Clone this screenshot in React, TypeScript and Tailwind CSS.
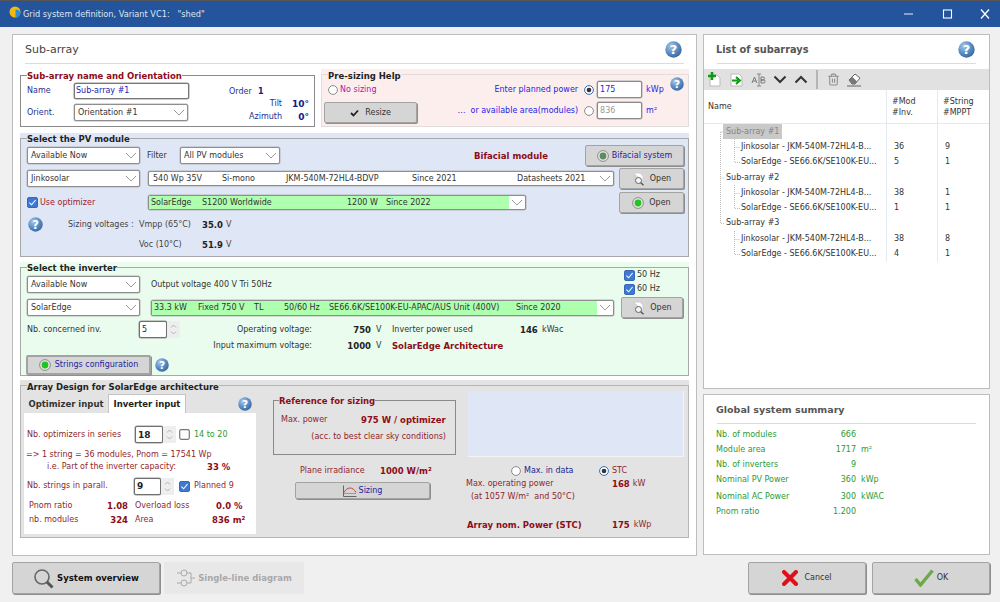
import React from "react";
import { Trash2 } from "lucide-react";

const Help = ({ s = 17 }: { s?: number }) => (
  <svg width={s} height={s} viewBox="0 0 17 17" className="shrink-0">
    <defs>
      <radialGradient id="hg" cx="35%" cy="30%" r="75%">
        <stop offset="0%" stopColor="#a9c6e6" />
        <stop offset="55%" stopColor="#5c8fc6" />
        <stop offset="100%" stopColor="#3a669f" />
      </radialGradient>
    </defs>
    <circle cx="8.5" cy="8.5" r="8.2" fill="url(#hg)" />
    <text x="8.5" y="13.2" textAnchor="middle" fontSize="13" fontWeight="700" fill="#fff" fontFamily="DejaVu Sans">?</text>
  </svg>
);

const Chev = () => (
  <svg width="12" height="7" viewBox="0 0 12 7" className="shrink-0">
    <polyline points="1,1 6,6 11,1" fill="none" stroke="#9a9a9a" strokeWidth="1" />
  </svg>
);

const Combo = ({ className = "", children, green = false }: { className?: string; children?: React.ReactNode; green?: boolean }) => (
  <div className={`flex items-stretch bg-white border border-[#8e8e8e] rounded-[2px] shadow-[0_0_0_0.5px_#b5b5b5] text-[#333] ${className}`}>
    <div className={`flex-1 min-w-0 flex items-center whitespace-nowrap overflow-hidden ${green ? "bg-[#aeffae]" : ""}`}>{children}</div>
    <div className="w-[16px] flex items-center justify-center shrink-0"><Chev /></div>
  </div>
);

const Led = ({ on = true }: { on?: boolean }) => (
  <svg width="12" height="12" viewBox="0 0 12 12" className="shrink-0">
    <circle cx="6" cy="6" r="5.4" fill="#e6e6e6" stroke="#777" strokeWidth="0.8" />
    <circle cx="6" cy="6" r="3.4" fill={on ? "#22c422" : "#5f8a62"} />
  </svg>
);

const OpenIcon = () => (
  <svg width="13" height="14" viewBox="0 0 13 14" className="shrink-0">
    <path d="M2 1h6l3 3v5" fill="#fff" stroke="#cfcfcf" />
    <path d="M2 1v10h3" fill="none" stroke="#cfcfcf" />
    <circle cx="6.5" cy="8.5" r="3" fill="#f4f4f4" stroke="#666" strokeWidth="1" />
    <line x1="8.8" y1="10.8" x2="11.5" y2="13.2" stroke="#555" strokeWidth="1.5" />
  </svg>
);

const Btn = ({ className = "", children }: { className?: string; children?: React.ReactNode }) => (
  <div className={`flex items-center justify-center shrink-0 bg-[#d5d5d5] border border-[#a3a3a3] rounded-[2px] shadow-[1px_1px_0_#8f8f8f] ${className}`}>{children}</div>
);

const OpenBtn = ({ className = "", icon }: { className?: string; icon?: React.ReactNode }) => (
  <Btn className={`gap-[5px] text-[#333] ${className}`}>{icon ?? <OpenIcon />}Open</Btn>
);

const Check = ({ on = true }: { on?: boolean }) =>
  on ? (
    <svg width="11" height="11" viewBox="0 0 11 11" className="shrink-0">
      <rect x="0.5" y="0.5" width="10" height="10" rx="1.5" fill="#3f78d0" stroke="#3568b8" />
      <polyline points="2.4,5.6 4.6,7.8 8.6,3" fill="none" stroke="#fff" strokeWidth="1.1" />
    </svg>
  ) : (
    <svg width="11" height="11" viewBox="0 0 11 11" className="shrink-0">
      <rect x="0.7" y="0.7" width="9.6" height="9.6" rx="1.5" fill="#fff" stroke="#777" strokeWidth="1.2" />
    </svg>
  );

const Radio = ({ on = false }: { on?: boolean }) => (
  <svg width="10" height="10" viewBox="0 0 10 10" className="shrink-0">
    <circle cx="5" cy="5" r="4.4" fill="#fff" stroke={on ? "#2f6cb5" : "#8a8a8a"} strokeWidth="1" />
    {on && <circle cx="5" cy="5" r="2.3" fill="#333" />}
  </svg>
);

const Spin = ({ v, w, bold = false }: { v: string; w: string; bold?: boolean }) => (
  <div className="flex items-stretch h-[17px] shrink-0">
    <div className={`bg-white border border-[#707070] rounded-[2px] shadow-[0_0_0_0.5px_#999] flex items-center pl-[2px] text-[#222] ${w} ${bold ? "font-bold text-[9px]" : ""}`}>{v}</div>
    <div className="w-[13px] bg-[#eeeeee] flex flex-col items-center justify-center gap-[3px]">
      <svg width="7" height="4" viewBox="0 0 7 4"><polyline points="1,3.5 3.5,1 6,3.5" fill="none" stroke="#b0b0b0" /></svg>
      <svg width="7" height="4" viewBox="0 0 7 4"><polyline points="1,0.5 3.5,3 6,0.5" fill="none" stroke="#b0b0b0" /></svg>
    </div>
  </div>
);

const Section = ({ title, color = "text-[#222]", className = "", border = "border-[#a8a8a8]", children, legendCls = "ml-[6px] translate-y-px" }: { title: string; color?: string; className?: string; border?: string; children?: React.ReactNode; legendCls?: string }) => (
  <fieldset className={`min-w-0 border ${border} ${className}`}>
    <legend className={`${legendCls} leading-[10px] font-bold text-[8.5px] whitespace-nowrap ${color}`}>{title}</legend>
    {children}
  </fieldset>
);

const Panel = ({ className = "", children }: { className?: string; children?: React.ReactNode }) => (
  <div className={`bg-white border border-[#bdbdbd] flex flex-col ${className}`}>{children}</div>
);

const Tree = () => (
  <svg width="40" height="140" viewBox="0 0 40 140" className="absolute left-[5px] top-0">
    <g fill="none" stroke="#bdbdbd" strokeDasharray="1 1">
      <path d="M11.5 8V99.5H16" />
      <path d="M11.5 8H16" />
      <path d="M11.5 54H16" />
      <path d="M25.5 15V38.5H31M25.5 23.5H31" />
      <path d="M25.5 61V84.5H31M25.5 69.5H31" />
      <path d="M25.5 107V130.5H31M25.5 115.5H31" />
    </g>
  </svg>
);

const rows: [number, string, string, string][] = [
  [0, "Sub-array #1", "", ""],
  [1, "Jinkosolar - JKM-540M-72HL4-B...", "36", "9"],
  [1, "SolarEdge - SE66.6K/SE100K-EU...", "5", "1"],
  [0, "Sub-array #2", "", ""],
  [1, "Jinkosolar - JKM-540M-72HL4-B...", "38", "1"],
  [1, "SolarEdge - SE66.6K/SE100K-EU...", "1", "1"],
  [0, "Sub-array #3", "", ""],
  [1, "Jinkosolar - JKM-540M-72HL4-B...", "38", "8"],
  [1, "SolarEdge - SE66.6K/SE100K-EU...", "4", "1"],
];

const Summary = ({ l, v, u = "", className = "" }: { l: string; v: string; u?: string; className?: string }) => (
  <div className={`flex items-center h-[15px] pl-[12px] text-[#2b9a34] ${className}`}>
    <div className="w-[100px]">{l}</div>
    <div className="w-[40px] text-right">{v}</div>
    <div className="ml-[5px]">{u}</div>
  </div>
);

const M = "text-[#8f1f2a]";
const B = "font-bold text-[8.5px] text-[#8c0d18]";
const D = "font-bold text-[8.5px] text-[#222]";

export default function App() {
  return (
    <div className="w-[1000px] h-[602px] overflow-hidden bg-[#f0f0f0] flex flex-col font-['DejaVu_Sans',sans-serif] text-[8px] leading-[12px]">
      {/* Title bar */}
      <div className="h-[27px] shrink-0 bg-[#24549b] border-t border-[#555] flex items-center text-[#dfe7f3]">
        <svg width="12" height="12" viewBox="0 0 12 12" className="ml-[9px] -mt-[4px]">
          <circle cx="6" cy="6" r="5.5" fill="#f2b90f" />
          <path d="M6.5 3.5a5 5 0 0 1 5 3a5.5 5.5 0 0 1-5 5z" fill="#2f8fd0" />
        </svg>
        <span className="ml-[2px] text-[8.2px]">Grid system definition, Variant VC1:&nbsp;&nbsp; "shed"</span>
        <svg width="90" height="14" viewBox="0 0 90 14" className="ml-auto mr-[6px]">
          <line x1="0" y1="7" x2="9" y2="7" stroke="#c9d6ea" strokeWidth="1.2" />
          <rect x="39.5" y="3" width="8" height="8" fill="none" stroke="#fff" strokeWidth="1.1" />
          <path d="M77 2.5l8 9M85 2.5l-8 9" stroke="#fff" strokeWidth="1.3" />
        </svg>
      </div>

      <div className="flex gap-[6px] pl-[12px] pt-[7px]">
        {/* LEFT PANEL */}
        <Panel className="w-[685px] h-[522px]">
          <div className="h-[28px] flex items-center justify-between pl-[12px] pr-[14px] shrink-0">
            <span className="text-[11px] text-[#444] translate-y-px">Sub-array</span>
            <Help />
          </div>
          <div className="mx-[12px] h-px bg-[#dcdcdc] shrink-0" />

          <div className="px-[7px] mt-[5px] flex flex-col">
            {/* Row 1 */}
            <div className="flex gap-[6px] h-[58px]">
              <div className="w-[296px] pt-px">
                <Section title="Sub-array name and Orientation" color="text-[#8c0d18]" className="h-full flex" border="border-[#8a8a8a]">
                  <div className="flex">
                    <div className="pl-[6px] w-[168px] shrink-0">
                      <div className="flex items-center mt-[3px] text-[#1f2f8f]">
                        <div className="w-[47px]">Name</div>
                        <div className="w-[115px] h-[16px] bg-white border border-[#777] rounded-[2px] shadow-[0_0_0_0.5px_#999] flex items-center pl-[1px] text-[#2424b0]">Sub-array #1</div>
                      </div>
                      <div className="flex items-center mt-[5px] text-[#1f2f8f]">
                        <div className="w-[47px]">Orient.</div>
                        <Combo className="w-[114px] h-[17px]"><span className="pl-[3px]">Orientation #1</span></Combo>
                      </div>
                    </div>
                    <div className="mt-[6px] text-[#1f2f8f]">
                      <div className="flex h-[12px] pl-[40px]">
                        <div className="w-[29px]">Order</div>
                        <div className="font-bold text-[#141a8a]">1</div>
                      </div>
                      <div className="flex h-[12px]">
                        <div className="w-[93px] text-right">Tilt</div>
                        <div className="w-[27px] text-right font-bold text-[#141a8a] text-[9px]">10°</div>
                      </div>
                      <div className="flex h-[12px] mt-px">
                        <div className="w-[93px] text-right">Azimuth</div>
                        <div className="w-[27px] text-right font-bold text-[#141a8a] text-[9px]">0°</div>
                      </div>
                    </div>
                  </div>
                </Section>
              </div>

              <div className="w-[369px] bg-[#fdeeee]">
                <Section title="Pre-sizing Help" className="h-full" border="border-[#e3dcdc]" color="text-[#222]" legendCls="ml-[6px] translate-y-[2px]">
                  <div className="flex">
                    <div className="w-[100px] shrink-0 pl-[6px] mt-[2px]">
                      <div className="h-[17px] flex items-center gap-[2px] text-[#a521a5]"><Radio />No sizing</div>
                      <Btn className="w-[93px] h-[21px] mt-[4px] -ml-[4px] gap-[6px] text-[#333]">
                        <svg width="9" height="8" viewBox="0 0 9 8"><polyline points="1,4 3.5,6.5 8,1.5" fill="none" stroke="#222" strokeWidth="1.8" /></svg>
                        Resize
                      </Btn>
                    </div>
                    <div className="mt-[2px] text-[#2323e6]">
                      <div className="flex items-center h-[17px]">
                        <div className="w-[156px] text-right">Enter planned power</div>
                        <div className="ml-[6px]"><Radio on /></div>
                        <div className="ml-[3px] w-[45px] h-[17px] bg-white border border-[#8a8a8a] rounded-[2px] shadow-[0_0_0_0.5px_#aaa] flex items-center pl-[2px]">175</div>
                        <div className="ml-[4px] w-[24px]">kWp</div>
                        <div className="self-start -mt-[4px]"><Help s={14} /></div>
                      </div>
                      <div className="flex items-center h-[17px] mt-[4px]">
                        <div className="w-[156px] text-right whitespace-nowrap">…&nbsp; or available area(modules)</div>
                        <div className="ml-[6px]"><Radio /></div>
                        <div className="ml-[3px] w-[45px] h-[17px] bg-white border border-[#8a8a8a] rounded-[2px] shadow-[0_0_0_0.5px_#aaa] flex items-center pl-[2px] text-[#999]">836</div>
                        <div className="ml-[4px]">m²</div>
                      </div>
                    </div>
                  </div>
                </Section>
              </div>
            </div>

            {/* PV module */}
            <div className="mt-[6px] h-[124px] bg-[#dfe7f7]">
              <Section title="Select the PV module" className="h-full">
                <div className="pl-[6px]">
                  <div className="flex items-center h-[17px] mt-[4px]">
                    <Combo className="w-[113px] h-[17px]"><span className="pl-[3px]">Available Now</span></Combo>
                    <div className="ml-[7px] w-[33px] text-[#333]">Filter</div>
                    <Combo className="w-[100px] h-[17px]"><span className="pl-[3px]">All PV modules</span></Combo>
                    <div className={`ml-[194px] w-[111px] ${B}`}>Bifacial module</div>
                    <Btn className="w-[99px] h-[21px] gap-[3px] text-[#2323a0]"><Led on={false} />Bifacial system</Btn>
                  </div>
                  <div className="flex items-center h-[17px] mt-[6px]">
                    <Combo className="w-[113px] h-[17px]"><span className="pl-[3px]">Jinkosolar</span></Combo>
                    <Combo className="ml-[8px] w-[466px] h-[15px]">
                      <span className="pl-[4px] w-[73px] shrink-0">540 Wp 35V</span>
                      <span className="w-[64px] shrink-0">Si-mono</span>
                      <span className="w-[126px] shrink-0">JKM-540M-72HL4-BDVP</span>
                      <span className="w-[105px] shrink-0">Since 2021</span>
                      <span>Datasheets 2021</span>
                    </Combo>
                    <OpenBtn className="ml-[5px] w-[65px] h-[21px]" />
                  </div>
                  <div className="flex items-center h-[21px] mt-[5px]">
                    <div className="w-[121px] flex items-center gap-[2px] text-[#a1202c]"><Check />Use optimizer</div>
                    <Combo green className="w-[378px] h-[15px]">
                      <span className="pl-[2px] w-[53px] shrink-0">SolarEdge</span>
                      <span className="w-[145px] shrink-0">S1200 Worldwide</span>
                      <span className="w-[39px] shrink-0">1200 W</span>
                      <span>Since 2022</span>
                    </Combo>
                    <OpenBtn className="ml-[93px] w-[65px] h-[21px]" icon={<Led />} />
                  </div>
                  <div className="flex items-center h-[15px] mt-[4px] text-[#444]">
                    <div className="ml-px w-[40px]"><Help s={15} /></div>
                    <div className="w-[71px]">Sizing voltages :</div>
                    <div className="w-[63px]">Vmpp (65°C)</div>
                    <div className={`w-[24px] ${D}`}>35.0</div>
                    <div>V</div>
                  </div>
                  <div className="flex items-center h-[15px] mt-[5px] text-[#444]">
                    <div className="ml-[112px] w-[63px]">Voc (10°C)</div>
                    <div className={`w-[24px] ${D}`}>51.9</div>
                    <div>V</div>
                  </div>
                </div>
              </Section>
            </div>

            {/* Inverter */}
            <div className="mt-[5px] h-[114px] bg-[#e9fced]">
              <Section title="Select the inverter" className="h-full">
                <div className="pl-[6px]">
                  <div className="flex items-center h-[17px] mt-[4px]">
                    <Combo className="w-[113px] h-[17px]"><span className="pl-[3px]">Available Now</span></Combo>
                    <div className="ml-[11px] w-[473px] text-[#333]">Output voltage 400 V Tri 50Hz</div>
                    <div className="self-start -mt-[8px] text-[#333]">
                      <div className="flex items-center h-[14px] gap-[2px]"><Check />50 Hz</div>
                      <div className="flex items-center h-[14px] gap-[2px]"><Check />60 Hz</div>
                    </div>
                  </div>
                  <div className="flex items-center h-[17px] mt-[6px]">
                    <Combo className="w-[113px] h-[17px]"><span className="pl-[3px]">SolarEdge</span></Combo>
                    <Combo green className="ml-[11px] w-[463px] h-[16px]">
                      <span className="pl-[2px] w-[46px] shrink-0">33.3 kW</span>
                      <span className="w-[56px] shrink-0">Fixed 750 V</span>
                      <span className="w-[30px] shrink-0">TL</span>
                      <span className="w-[45px] shrink-0">50/60 Hz</span>
                      <span className="w-[187px] shrink-0">SE66.6K/SE100K-EU-APAC/AUS Unit (400V)</span>
                      <span>Since 2020</span>
                    </Combo>
                    <OpenBtn className="ml-[7px] w-[62px] h-[21px]" />
                  </div>
                  <div className="flex items-center h-[17px] mt-[5px] text-[#333]">
                    <div className="w-[112px]">Nb. concerned inv.</div>
                    <Spin v="5" w="w-[28px]" />
                    <div className="w-[132px] text-right">Operating voltage:</div>
                    <div className={`w-[59px] text-right ${D}`}>750</div>
                    <div className="w-[21px] pl-[5px]">V</div>
                    <div className="w-[128px]">Inverter power used</div>
                    <div className={`w-[22px] ${D}`}>146</div>
                    <div>kWac</div>
                  </div>
                  <div className="flex items-center h-[15px] text-[#333]">
                    <div className="ml-[153px] w-[132px] text-right">Input maximum voltage:</div>
                    <div className={`w-[59px] text-right ${D}`}>1000</div>
                    <div className="w-[21px] pl-[5px]">V</div>
                    <div className={B}>SolarEdge Architecture</div>
                  </div>
                  <div className="flex items-center mt-[2px] -ml-px">
                    <Btn className="w-[125px] h-[20px] gap-[4px] border-2 border-[#808080] text-[#2323a0]"><Led />Strings configuration</Btn>
                    <div className="ml-[4px]"><Help s={14} /></div>
                  </div>
                </div>
              </Section>
            </div>

            {/* Array design */}
            <div className="mt-[4px] h-[158px] bg-[#e3e3e3]">
              <Section title="Array Design for SolarEdge architecture" className="h-full" border="border-[#b5b5b5]" legendCls="ml-[6px] translate-y-[2px]">
                <div className="flex pl-[3px]">
                  <div className="w-[232px] shrink-0 pt-[4px]">
                    <div className="flex items-end h-[19px] font-bold text-[8.5px]">
                      <div className="w-[84px] h-[18px] flex items-center justify-center text-[#333]">Optimizer input</div>
                      <div className="w-[78px] h-[19px] bg-white border-x border-t border-[#c4c4c4] flex items-center justify-center text-[#222]">Inverter input</div>
                      <div className="ml-[52px] self-center"><Help s={14} /></div>
                    </div>
                    <div className={`h-[121px] bg-white pt-[13px] ${M}`}>
                      <div className="flex items-center pl-[3px]">
                        <div className="w-[108px]">Nb. optimizers in series</div>
                        <Spin v="18" w="w-[28px]" bold />
                        <div className="ml-[3px]"><Check on={false} /></div>
                        <div className="ml-[4px] text-[#2b9a34]">14 to 20</div>
                      </div>
                      <div className="h-[12px] mt-[6px] pl-[2px] whitespace-nowrap">=&gt; 1 string = 36 modules, Pnom = 17541 Wp</div>
                      <div className="flex h-[12px] pl-[23px]">
                        <div className="w-[160px]">i.e. Part of the inverter capacity:</div>
                        <div className={B}>33 %</div>
                      </div>
                      <div className="flex items-center h-[18px] mt-[4px] pl-[3px]">
                        <div className="w-[107px]">Nb. strings in parall.</div>
                        <Spin v="9" w="w-[27px]" bold />
                        <div className="ml-[5px]"><Check /></div>
                        <div className="ml-[4px]">Planned 9</div>
                      </div>
                      <div className="flex h-[12px] mt-[5px] pl-[5px]">
                        <div className="w-[70px]">Pnom ratio</div>
                        <div className={`w-[29px] text-right ${B}`}>1.08</div>
                        <div className="ml-[7px] w-[81px]">Overload loss</div>
                        <div className={B}>0.0 %</div>
                      </div>
                      <div className="flex h-[12px] mt-[2px] pl-[5px]">
                        <div className="w-[70px]">nb. modules</div>
                        <div className={`w-[29px] text-right ${B}`}>324</div>
                        <div className="ml-[7px] w-[77px]">Area</div>
                        <div className={B}>836 m²</div>
                      </div>
                    </div>
                  </div>

                  <div className={`ml-[17px] w-[183px] shrink-0 ${M}`}>
                    <div className="h-[60px] mt-[5px]">
                      <Section title="Reference for sizing" color="text-[#8c0d18]" className="h-full" border="border-[#8a8a8a]" legendCls="ml-[5px] translate-y-px">
                        <div className="flex h-[12px] mt-[9px] pl-[7px]">
                          <div className="w-[80px]">Max. power</div>
                          <div className={B}>975 W / optimizer</div>
                        </div>
                        <div className="h-[12px] mt-[5px] pr-[9px] text-right">(acc. to best clear sky conditions)</div>
                      </Section>
                    </div>
                    <div className="flex h-[12px] mt-[10px] pl-[27px]">
                      <div className="w-[80px]">Plane irradiance</div>
                      <div className={B}>1000 W/m²</div>
                    </div>
                    <Btn className="ml-[22px] mt-[5px] w-[135px] h-[17px] gap-[2px] text-[#2323a0]">
                      <svg width="14" height="12" viewBox="0 0 14 12">
                        <path d="M0.5 0.5V11.5H13.5" fill="none" stroke="#666" />
                        <path d="M1 7.5C4 1.5 10 1.5 13 7.5" fill="none" stroke="#c9404a" />
                        <line x1="1" y1="8.5" x2="13" y2="8.5" stroke="#999" />
                      </svg>
                      Sizing
                    </Btn>
                  </div>

                  <div className={`ml-[12px] w-[216px] shrink-0 ${M}`}>
                    <div className="mt-px h-[66px] bg-[#dfe7f7] border-b border-r border-[#f4f4f4]" />
                    <div className="flex items-center h-[12px] mt-[8px] pl-[43px]">
                      <Radio />
                      <div className="ml-[3px] w-[75px] text-[#23238f]">Max. in data</div>
                      <Radio on />
                      <div className="ml-[3px]">STC</div>
                    </div>
                    <div className="flex h-[12px] mt-px -ml-[2px]">
                      <div className="w-[146px]">Max. operating power</div>
                      <div className={`${B} mr-[3px]`}>168</div>
                      <div>kW</div>
                    </div>
                    <div className="h-[12px] mt-px pl-[3px]">(at 1057 W/m²&nbsp; and 50°C)</div>
                    <div className="flex h-[12px] mt-[16px] -ml-px">
                      <div className={`w-[145px] whitespace-nowrap ${B}`}>Array nom. Power (STC)</div>
                      <div className={`${B} mr-[4px]`}>175</div>
                      <div>kWp</div>
                    </div>
                  </div>
                </div>
              </Section>
            </div>
          </div>
        </Panel>

        {/* RIGHT COLUMN */}
        <div className="w-[287px] flex flex-col gap-[5px]">
          <Panel className="h-[355px]">
            <div className="h-[28px] flex items-center justify-between pl-[12px] pr-[14px] shrink-0">
              <span className="text-[9.8px] font-bold text-[#555] translate-y-px">List of subarrays</span>
              <Help />
            </div>
            <div className="mx-[13px] h-px bg-[#dcdcdc] shrink-0" />
            <div className="mt-[5px] h-[21px] bg-[#e1e1e1] flex items-center pl-[3px] shrink-0">
              <svg width="14" height="15" viewBox="0 0 14 15">
                <path d="M3 3h7l3 3v8H3z" fill="#fff" stroke="#bbb" />
                <path d="M5 0v8M1 4h8" stroke="#119a11" strokeWidth="2.6" />
              </svg>
              <svg width="14" height="14" viewBox="0 0 14 14" className="ml-[9px]">
                <path d="M1 1h8l3 3v9H1z" fill="#fff" stroke="#bbb" />
                <path d="M2 7.5h6M6 4l4 3.5L6 11" fill="none" stroke="#119a11" strokeWidth="2" />
              </svg>
              <svg width="16" height="14" viewBox="0 0 16 14" className="ml-[7px]">
                <line x1="8" y1="1" x2="8" y2="13" stroke="#888" />
                <path d="M6 1h4M6 13h4" stroke="#888" />
                <path d="M1 10l2.5-6L6 10M2 8h3" fill="none" stroke="#777" />
                <path d="M10 4v6h2.5a1.5 1.5 0 0 0 0-3H10m0 0h2a1.5 1.5 0 0 0 0-3H10" fill="none" stroke="#777" />
              </svg>
              <svg width="14" height="9" viewBox="0 0 14 9" className="ml-[6px]">
                <polyline points="1.5,1.5 7,7 12.5,1.5" fill="none" stroke="#333" strokeWidth="2" />
              </svg>
              <svg width="14" height="9" viewBox="0 0 14 9" className="ml-[7px]">
                <polyline points="1.5,7.5 7,2 12.5,7.5" fill="none" stroke="#333" strokeWidth="2" />
              </svg>
              <div className="w-[2px] h-[19px] bg-[#b5b5b5] ml-[8px]" />
              <Trash2 size={13} strokeWidth={2} color="#8f8f8f" className="ml-[9px]" />
              <svg width="15" height="15" viewBox="0 0 15 15" className="ml-[7px]">
                <path d="M2 8l6-6 5 4-5 6H5z" fill="#fff" stroke="#666" />
                <path d="M2 8l3 4h3l2-2.6-4.5-4.5z" fill="#777" />
                <line x1="0" y1="14" x2="14" y2="14" stroke="#777" strokeWidth="1.2" />
              </svg>
            </div>
            <div className="flex h-[34px] border-b border-[#e4eaf2] text-[#333] shrink-0">
              <div className="w-[183px] border-r border-[#e4eaf2] flex items-center pl-[4px]">Name</div>
              <div className="w-[51px] border-r border-[#e4eaf2] flex items-center pl-[5px] leading-[11px]">#Mod<br />#Inv.</div>
              <div className="flex items-center pl-[5px] leading-[11px]">#String<br />#MPPT</div>
            </div>
            <div className="relative text-[#333]">
              <Tree />
              {rows.map(([lvl, name, a, b], i) => (
                <div key={i} className="flex h-[15.3px] items-center">
                  <div className="w-[183px] h-full border-r border-[#e4eaf2] flex items-center">
                    {lvl === 0 ? (
                      <div className={`ml-[19px] h-full flex items-center px-[3px] ${i === 0 ? "bg-[#c9c9c9] text-[#858585]" : ""}`}>{name}</div>
                    ) : (
                      <div className="ml-[37px] whitespace-nowrap">{name}</div>
                    )}
                  </div>
                  <div className="w-[51px] h-full border-r border-[#e4eaf2] flex items-center pl-[7px]">{a}</div>
                  <div className="pl-[7px]">{b}</div>
                </div>
              ))}
            </div>
          </Panel>
          <Panel className="h-[161px]">
            <div className="h-[28px] flex items-center pl-[12px] shrink-0">
              <span className="text-[9.5px] font-bold text-[#555] translate-y-px">Global system summary</span>
            </div>
            <div className="mx-[13px] h-px bg-[#dcdcdc] shrink-0" />
            <div className="mt-[3px]">
              <Summary l="Nb. of modules" v="666" />
              <Summary l="Module area" v="1717" u="m²" />
              <Summary l="Nb. of inverters" v="9" />
              <Summary l="Nominal PV Power" v="360" u="kWp" />
              <Summary l="Nominal AC Power" v="300" u="kWAC" className="mt-[2px]" />
              <Summary l="Pnom ratio" v="1.200" />
            </div>
          </Panel>
        </div>
      </div>

      {/* Bottom buttons */}
      <div className="flex pl-[12px] pr-[10px] mt-[6px]">
        <Btn className="w-[148px] h-[32px] gap-[3px] font-bold text-[8.5px] text-[#111]">
          <svg width="21" height="21" viewBox="0 0 21 21">
            <circle cx="9" cy="9" r="7" fill="none" stroke="#666" strokeWidth="1.6" />
            <line x1="14" y1="14" x2="19.5" y2="19.5" stroke="#555" strokeWidth="3" />
          </svg>
          System overview
        </Btn>
        <div className="ml-[4px] w-[140px] h-[32px] bg-[#e8e8e8] flex items-center justify-center gap-[3px] font-bold text-[8.5px] text-[#a8a8a8]">
          <svg width="19" height="18" viewBox="0 0 19 18" fill="none" stroke="#aaa">
            <circle cx="8" cy="4" r="3" />
            <circle cx="8" cy="14" r="3" />
            <path d="M1 4h4M1 14h4M11 4h4v10h-4M15 9h4" />
          </svg>
          Single-line diagram
        </div>
        <Btn className="ml-auto w-[118px] h-[32px] gap-[6px] text-[#333]">
          <svg width="16" height="16" viewBox="0 0 16 16"><path d="M2 2l12 12M14 2L2 14" stroke="#e0101a" strokeWidth="4" strokeLinecap="round" /></svg>
          Cancel
        </Btn>
        <Btn className="ml-[6px] w-[118px] h-[32px] gap-[3px] text-[#333]">
          <svg width="20" height="18" viewBox="0 0 20 18"><path d="M1.5 10l5 6L18.5 1.5" fill="none" stroke="#6fa84a" strokeWidth="3.4" /></svg>
          OK
        </Btn>
      </div>
    </div>
  );
}
